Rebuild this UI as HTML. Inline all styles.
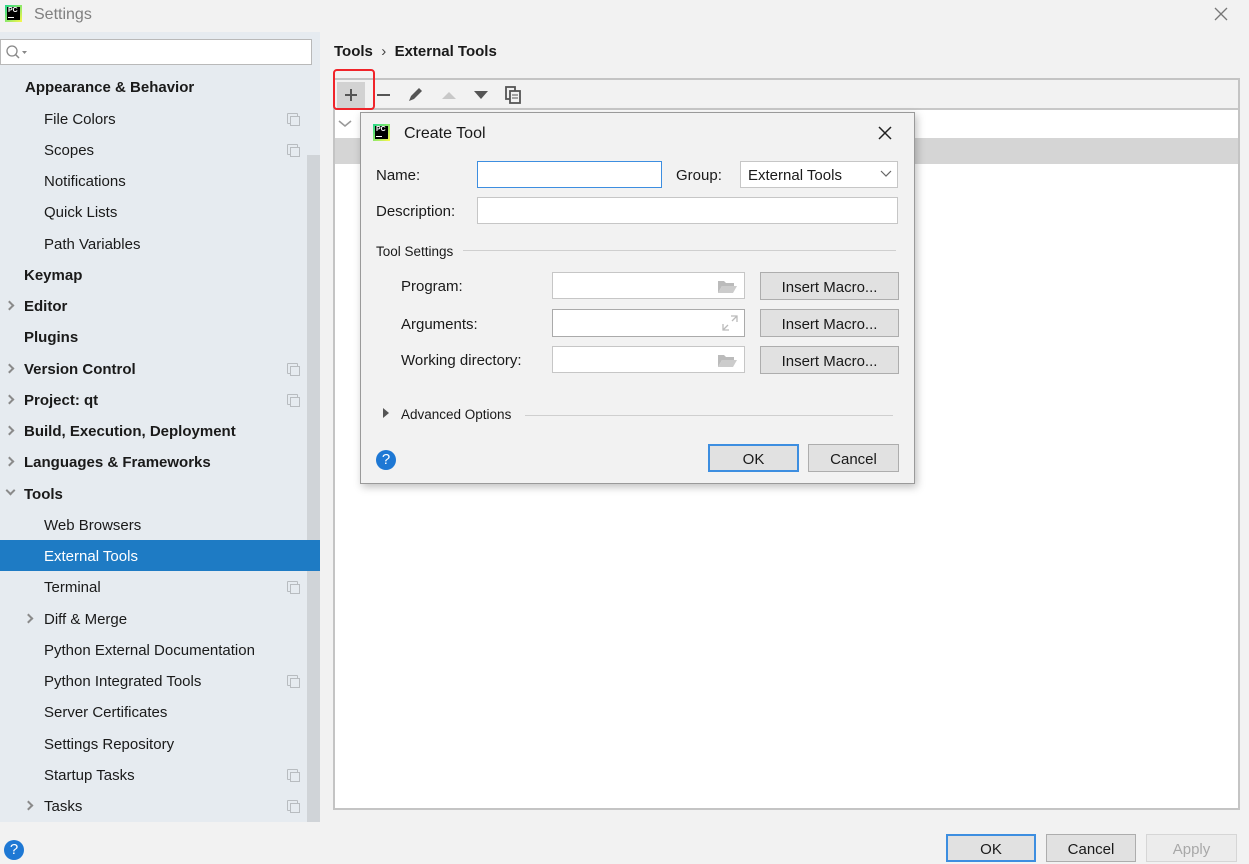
<!DOCTYPE html>
<html><head><meta charset="utf-8">
<style>
*{margin:0;padding:0;box-sizing:border-box}
body{width:1249px;height:864px;background:#f2f2f2;font-family:"Liberation Sans","Noto Sans CJK SC",sans-serif;font-size:15px;color:#1a1a1a;position:relative;overflow:hidden}
.a{position:absolute}
.side{left:0;top:32px;width:320px;height:790px;background:#e6ebf0}
.it{position:absolute;left:0;width:307px;height:31px;line-height:33px;white-space:nowrap}
.b{font-weight:bold}
.cp{position:absolute;left:287px;top:10px;width:11px;height:11px;border:1px solid #b8bcc0;border-radius:1px}
.cp:after{content:"";position:absolute;left:2px;top:2px;width:8px;height:8px;border:1px solid #b8bcc0;background:#e6ebf0}
.arr{position:absolute;left:6px;top:12px;width:7px;height:7px;border-right:2px solid #8a8a8a;border-bottom:2px solid #8a8a8a;transform:rotate(-45deg)}
.arrd{transform:rotate(45deg);top:9px;left:7px}
.inp{position:absolute;background:#fff;border:1px solid #c6c6c6}
.btn{position:absolute;background:#e1e1e1;border:1px solid #adadad;text-align:center;font-size:15px}
</style></head><body>
<div class="a" style="left:5px;top:5px;width:17px;height:17px;background:linear-gradient(135deg,#21d789,#fcf84a)"><div style="position:absolute;left:2px;top:2px;width:13px;height:13px;background:#000;color:#fff;font-size:7px;font-weight:bold;line-height:8px;padding-left:1px">PC<div style="width:6px;height:1px;background:#fff;margin-top:2px"></div></div></div>
<div class="a" style="left:34px;top:6px;font-size:16px;color:#808080">Settings</div>
<svg class="a" style="left:1214px;top:7px" width="14" height="14"><path d="M1 1L13 13M13 1L1 13" stroke="#777" stroke-width="1.3"/></svg>

<div class="a side"></div>
<div class="a" style="left:0;top:39px;width:312px;height:26px;background:#fff;border:1px solid #b9b9b9"></div>
<svg class="a" style="left:5px;top:44px" width="22" height="16"><circle cx="7" cy="7" r="5" fill="none" stroke="#888" stroke-width="1.3"/><path d="M10.5 10.5L14 14" stroke="#888" stroke-width="1.5"/><path d="M17 7h5l-2.5 3z" fill="#888"/></svg>
<div class="a" style="left:307px;top:155px;width:13px;height:667px;background:#d0d4d8"></div>

<div class="it b" style="top:71px;left:25px">Appearance &amp; Behavior</div>
<div class="it" style="top:103px"><span style="margin-left:44px">File Colors</span><div class="cp"></div></div>
<div class="it" style="top:134px"><span style="margin-left:44px">Scopes</span><div class="cp"></div></div>
<div class="it" style="top:165px"><span style="margin-left:44px">Notifications</span></div>
<div class="it" style="top:196px"><span style="margin-left:44px">Quick Lists</span></div>
<div class="it" style="top:228px"><span style="margin-left:44px">Path Variables</span></div>
<div class="it b" style="top:259px"><span style="margin-left:24px">Keymap</span></div>
<div class="it b" style="top:290px"><div class="arr"></div><span style="margin-left:24px">Editor</span></div>
<div class="it b" style="top:321px"><span style="margin-left:24px">Plugins</span></div>
<div class="it b" style="top:353px"><div class="arr"></div><span style="margin-left:24px">Version Control</span><div class="cp"></div></div>
<div class="it b" style="top:384px"><div class="arr"></div><span style="margin-left:24px">Project: qt</span><div class="cp"></div></div>
<div class="it b" style="top:415px"><div class="arr"></div><span style="margin-left:24px">Build, Execution, Deployment</span></div>
<div class="it b" style="top:446px"><div class="arr"></div><span style="margin-left:24px">Languages &amp; Frameworks</span></div>
<div class="it b" style="top:478px"><div class="arr arrd"></div><span style="margin-left:24px">Tools</span></div>
<div class="it" style="top:509px"><span style="margin-left:44px">Web Browsers</span></div>
<div class="it" style="top:540px;width:320px;background:#1e7bc4;color:#fff"><span style="margin-left:44px">External Tools</span></div>
<div class="it" style="top:571px"><span style="margin-left:44px">Terminal</span><div class="cp"></div></div>
<div class="it" style="top:603px"><div class="arr" style="left:25px"></div><span style="margin-left:44px">Diff &amp; Merge</span></div>
<div class="it" style="top:634px"><span style="margin-left:44px">Python External Documentation</span></div>
<div class="it" style="top:665px"><span style="margin-left:44px">Python Integrated Tools</span><div class="cp"></div></div>
<div class="it" style="top:696px"><span style="margin-left:44px">Server Certificates</span></div>
<div class="it" style="top:728px"><span style="margin-left:44px">Settings Repository</span></div>
<div class="it" style="top:759px"><span style="margin-left:44px">Startup Tasks</span><div class="cp"></div></div>
<div class="it" style="top:790px"><div class="arr" style="left:25px"></div><span style="margin-left:44px">Tasks</span><div class="cp"></div></div>

<div class="a b" style="left:334px;top:43px;font-size:15px">Tools &nbsp;<span style="font-weight:normal;color:#444">›</span>&nbsp; External Tools</div>
<div class="a" style="left:333px;top:78px;width:907px;height:732px;border:2px solid #c4c4c4;background:#fff"></div>
<div class="a" style="left:335px;top:80px;width:903px;height:30px;background:#f2f2f2;border-bottom:2px solid #c8c8c8"></div>
<div class="a" style="left:335px;top:138px;width:903px;height:26px;background:#d5d5d5"></div>
<svg class="a" style="left:338px;top:119px" width="14" height="10"><path d="M1 2l6 5 6-5" fill="none" stroke="#999" stroke-width="1.6"/></svg>
<div class="a" style="left:337px;top:82px;width:28px;height:26px;background:#d2d2d2"></div>
<div class="a" style="left:333px;top:69px;width:42px;height:41px;border:2px solid #f0242a;border-radius:4px"></div>
<svg class="a" style="left:340px;top:85px" width="200" height="20"><path d="M11 4v12M5 10h12" stroke="#555" stroke-width="2"/><path d="M37 10h13" stroke="#555" stroke-width="2"/><path d="M69 16l2-5 8-8 3 3-8 8z" fill="#555"/><path d="M102 14l7-7 7 7z" fill="#c8c8c8"/><path d="M134 6h14l-7 8z" fill="#555"/><rect x="166" y="2" width="9" height="12" fill="none" stroke="#555" stroke-width="1.8"/><rect x="170" y="6" width="10" height="12" fill="#f2f2f2" stroke="#555" stroke-width="1.8"/><path d="M172 10h6M172 13h6" stroke="#555"/></svg>

<div class="a" style="left:360px;top:112px;width:555px;height:372px;background:#f2f2f2;border:1px solid #9a9a9a;box-shadow:2px 3px 8px rgba(0,0,0,.25)"></div>
<div class="a" style="left:373px;top:124px;width:17px;height:17px;background:linear-gradient(135deg,#21d789,#fcf84a)"><div style="position:absolute;left:2px;top:2px;width:13px;height:13px;background:#000;color:#fff;font-size:7px;font-weight:bold;line-height:8px;padding-left:1px">PC<div style="width:6px;height:1px;background:#fff;margin-top:2px"></div></div></div>
<div class="a" style="left:404px;top:125px;font-size:16px">Create Tool</div>
<svg class="a" style="left:878px;top:126px" width="14" height="14"><path d="M1 1L13 13M13 1L1 13" stroke="#222" stroke-width="1.5"/></svg>
<div class="a" style="left:376px;top:167px">Name:</div>
<div class="inp" style="left:477px;top:161px;width:185px;height:27px;border:1px solid #3d8ee0"></div>
<div class="a" style="left:676px;top:167px">Group:</div>
<div class="inp" style="left:740px;top:161px;width:158px;height:27px;padding:5px 7px">External Tools</div>
<svg class="a" style="left:880px;top:170px" width="12" height="8"><path d="M1 1l5 5 5-5" fill="none" stroke="#666" stroke-width="1.2"/></svg>
<div class="a" style="left:376px;top:203px">Description:</div>
<div class="inp" style="left:477px;top:197px;width:421px;height:27px"></div>
<div class="a" style="left:376px;top:244px;font-size:13.5px">Tool Settings</div>
<div class="a" style="left:463px;top:250px;width:433px;height:1px;background:#cfcfcf"></div>
<div class="a" style="left:401px;top:278px">Program:</div>
<div class="inp" style="left:552px;top:272px;width:193px;height:27px"></div>
<div class="a" style="left:401px;top:316px">Arguments:</div>
<div class="inp" style="left:552px;top:309px;width:193px;height:28px;border-color:#aaa"></div>
<div class="a" style="left:401px;top:352px">Working directory:</div>
<div class="inp" style="left:552px;top:346px;width:193px;height:27px"></div>
<svg class="a" style="left:717px;top:278px" width="20" height="16"><path d="M1 3h6l2 2h8v3H5l-4 7z" fill="#bbb"/><path d="M5 8h15l-4 7H1z" fill="#ccc"/></svg>
<svg class="a" style="left:717px;top:352px" width="20" height="16"><path d="M1 3h6l2 2h8v3H5l-4 7z" fill="#bbb"/><path d="M5 8h15l-4 7H1z" fill="#ccc"/></svg>
<svg class="a" style="left:722px;top:315px" width="16" height="16"><path d="M9 1h6v6M15 1l-5 5M7 15H1V9M1 15l5-5" fill="none" stroke="#bbb" stroke-width="1.3"/></svg>
<div class="btn" style="left:760px;top:272px;width:139px;height:28px;line-height:29px">Insert Macro...</div>
<div class="btn" style="left:760px;top:309px;width:139px;height:28px;line-height:29px">Insert Macro...</div>
<div class="btn" style="left:760px;top:346px;width:139px;height:28px;line-height:29px">Insert Macro...</div>
<svg class="a" style="left:382px;top:407px" width="8" height="12"><path d="M1 1l6 5-6 5z" fill="#555"/></svg>
<div class="a" style="left:401px;top:407px;font-size:13.5px">Advanced Options</div>
<div class="a" style="left:525px;top:415px;width:368px;height:1px;background:#cfcfcf"></div>
<div class="a" style="left:376px;top:450px;width:20px;height:20px;border-radius:50%;background:#1e78d4;color:#fff;text-align:center;font-size:15px;line-height:20px">?</div>
<div class="btn" style="left:708px;top:444px;width:91px;height:28px;line-height:28px;border:2px solid #3d8ee0">OK</div>
<div class="btn" style="left:808px;top:444px;width:91px;height:28px;line-height:29px">Cancel</div>

<div class="a" style="left:4px;top:840px;width:20px;height:20px;border-radius:50%;background:#1e78d4;color:#fff;text-align:center;font-size:15px;line-height:20px">?</div>
<div class="btn" style="left:946px;top:834px;width:90px;height:28px;line-height:28px;border:2px solid #3d8ee0">OK</div>
<div class="btn" style="left:1046px;top:834px;width:90px;height:28px;line-height:29px">Cancel</div>
<div class="btn" style="left:1146px;top:834px;width:91px;height:28px;line-height:29px;background:#ececec;border-color:#d6d6d6;color:#a8a8a8">Apply</div>
</body></html>
